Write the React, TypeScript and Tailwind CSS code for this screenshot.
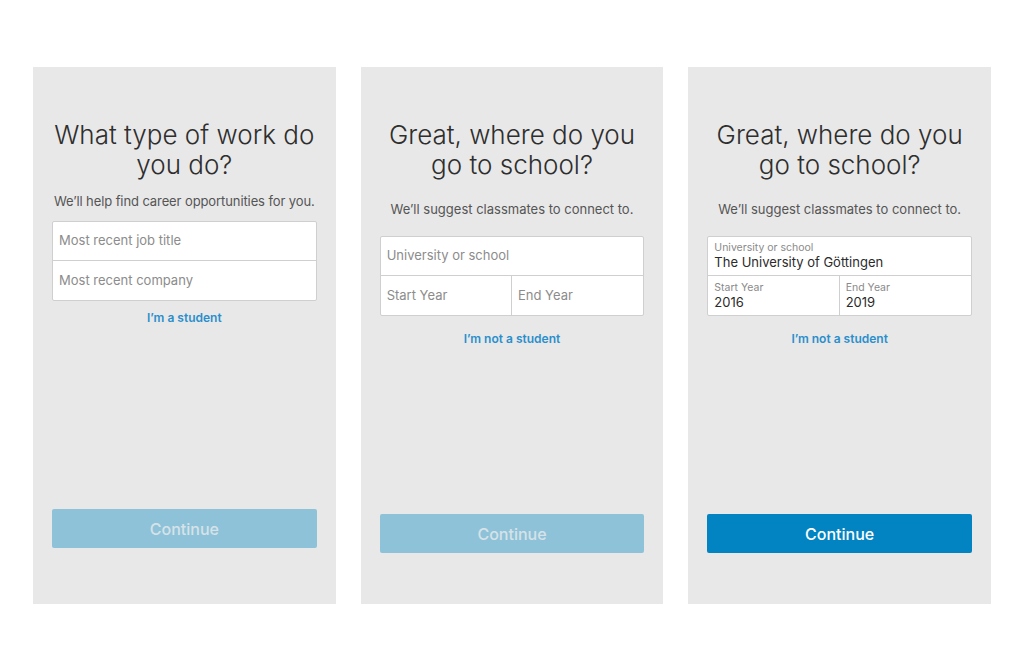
import React from 'react'

const font = { fontFamily: 'Inter, Roboto, "Noto Sans", sans-serif' }

const Field: React.FC<{ placeholder: string; label?: string; value?: string; className?: string }> = ({
  placeholder,
  label,
  value,
  className = '',
}) => (
  <div className={`h-[39px] flex flex-col justify-center px-[6px] ${className}`}>
    {value ? (
      <>
        <span className="text-[10.5px] leading-[12px] text-[#8a8a8a]">{label}</span>
        <span className="text-[13px] leading-[16px] text-[#2b2b2b]">{value}</span>
      </>
    ) : (
      <span className="text-[13px] text-[#8c8c8c]">{placeholder}</span>
    )}
  </div>
)

const ContinueButton: React.FC<{ enabled?: boolean }> = ({ enabled }) => (
  <button
    className={`w-full h-[39px] rounded-[2px] text-[16px] font-medium ${
      enabled ? 'bg-[#0284c2] text-white' : 'bg-[#8ec2d9] text-[#d6e2e8]'
    }`}
  >
    Continue
  </button>
)

export default function App() {
  return (
    <div className="w-[1024px] h-[672px] bg-white pt-[67px] px-[33px]" style={font}>
      <div className="grid grid-cols-3 gap-[25px] h-[537px]">
        {/* Screen 1: work */}
        <div className="bg-[#e8e8e8] flex flex-col px-[19px] pt-[53px] pb-[56px]">
          <h1 className="text-[26px] leading-[30px] font-light text-[#2e2e2e] text-center">
            What type of work do
            <br />
            you do?
          </h1>
          <p className="mt-[12px] -mx-[6px] whitespace-nowrap tracking-[-0.1px] text-[13px] leading-[18px] text-[#555] text-center">
            We’ll help find career opportunities for you.
          </p>
          <div className="mt-[11px] bg-white border border-[#cfcfcf] rounded-[2px]">
            <Field placeholder="Most recent job title" className="border-b border-[#cfcfcf]" />
            <Field placeholder="Most recent company" />
          </div>
          <a className="mt-[8px] text-center text-[12px] font-semibold text-[#2a8fcc]">I’m a student</a>
          <div className="mt-auto">
            <ContinueButton />
          </div>
        </div>

        {/* Screen 2: school, empty */}
        <div className="bg-[#e8e8e8] flex flex-col px-[19px] pt-[53px] pb-[51px]">
          <h1 className="text-[26px] leading-[30px] font-light text-[#2e2e2e] text-center">
            Great, where do you
            <br />
            go to school?
          </h1>
          <p className="mt-[20px] text-[13px] leading-[18px] text-[#555] text-center">
            We’ll suggest classmates to connect to.
          </p>
          <div className="mt-[18px] bg-white border border-[#cfcfcf] rounded-[2px]">
            <Field placeholder="University or school" className="border-b border-[#cfcfcf]" />
            <div className="grid grid-cols-2">
              <Field placeholder="Start Year" className="border-r border-[#cfcfcf]" />
              <Field placeholder="End Year" />
            </div>
          </div>
          <a className="mt-[14px] text-center text-[12px] font-semibold text-[#2a8fcc]">I’m not a student</a>
          <div className="mt-auto">
            <ContinueButton />
          </div>
        </div>

        {/* Screen 3: school, filled */}
        <div className="bg-[#e8e8e8] flex flex-col px-[19px] pt-[53px] pb-[51px]">
          <h1 className="text-[26px] leading-[30px] font-light text-[#2e2e2e] text-center">
            Great, where do you
            <br />
            go to school?
          </h1>
          <p className="mt-[20px] text-[13px] leading-[18px] text-[#555] text-center">
            We’ll suggest classmates to connect to.
          </p>
          <div className="mt-[18px] bg-white border border-[#cfcfcf] rounded-[2px]">
            <Field
              placeholder="University or school"
              label="University or school"
              value="The University of Göttingen"
              className="border-b border-[#cfcfcf]"
            />
            <div className="grid grid-cols-2">
              <Field placeholder="Start Year" label="Start Year" value="2016" className="border-r border-[#cfcfcf]" />
              <Field placeholder="End Year" label="End Year" value="2019" />
            </div>
          </div>
          <a className="mt-[14px] text-center text-[12px] font-semibold text-[#2a8fcc]">I’m not a student</a>
          <div className="mt-auto">
            <ContinueButton enabled />
          </div>
        </div>
      </div>
    </div>
  )
}
